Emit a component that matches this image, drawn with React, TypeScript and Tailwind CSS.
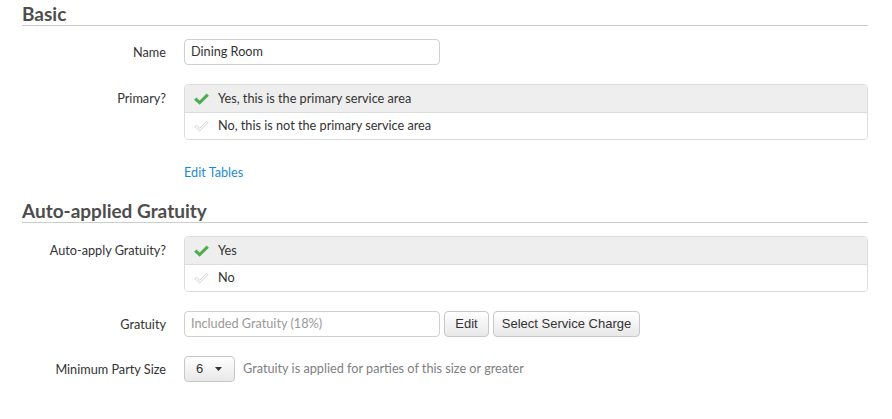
import React from 'react';

const font = "font-['Lato','Noto_Sans',sans-serif]";
const arial = "font-['Liberation_Sans','Arial',sans-serif]";

const Check: React.FC<{ on: boolean }> = ({ on }) => (
    <svg width="15" height="12" viewBox="0 0 16 13" className="shrink-0">
        {on ? (
            <polygon points="0,7.2 2.4,4.8 6,8.2 13.6,0.6 16,3 6,12.6" fill="#4cae4c" />
        ) : (
            <polygon points="0.8,7.2 2.4,5.6 6,9 13.6,1.4 15.2,3 6,11.8" fill="none" stroke="#c9c9c9" strokeWidth="0.9" />
        )}
    </svg>
);

const Label: React.FC<{ children: React.ReactNode; className?: string }> = ({ children, className }) => (
    <div className={`w-[144px] shrink-0 text-right text-[12.7px] leading-[18px] text-[#333] mr-[18px] ${className ?? ''}`}>{children}</div>
);

const Choices: React.FC<{ options: string[]; selected: number }> = ({ options, selected }) => (
    <div className="flex-1 border border-[#dcdcdc] rounded-[4px] overflow-hidden">
        {options.map((o, i) => (
            <div
                key={o}
                className={`h-[27px] flex items-center pl-[9px] text-[12.7px] text-[#333] ${i > 0 ? 'border-t border-[#dcdcdc]' : ''} ${i === selected ? 'bg-[#eeeeee]' : 'bg-white'}`}
            >
                <Check on={i === selected} />
                <span className="ml-[9px]">{o}</span>
            </div>
        ))}
    </div>
);

const btn = `h-[26px] border border-[#c8c8c8] rounded-[4px] bg-gradient-to-b from-white to-[#e8e8e8] text-[13px] text-[#333] whitespace-nowrap ${arial}`;

export default function App() {
    return (
        <div className={`w-[892px] h-[419px] bg-white pl-[22px] pr-[24px] pt-[3px] ${font}`}>
            {/* Basic */}
            <h2 className="text-[19px] font-bold leading-[21px] text-[#4d4d4d] pb-[1px] border-b border-[#cccccc]">Basic</h2>

            <div className="flex items-center mt-[13px]">
                <Label>Name</Label>
                <div className="w-[256px] h-[26px] border border-[#cfcfcf] rounded-[4px] pl-[6px] flex items-center text-[12.7px] text-[#333]">
                    Dining Room
                </div>
            </div>

            <div className="flex items-start mt-[19px]">
                <Label className="pt-[5px]">Primary?</Label>
                <Choices options={['Yes, this is the primary service area', 'No, this is not the primary service area']} selected={0} />
            </div>

            <div className="mt-[23px] pl-[162px] text-[12.7px] leading-[18px] text-[#1c8ad3]">
                <a href="#">Edit Tables</a>
            </div>

            {/* Auto-applied Gratuity */}
            <h2 className="mt-[19px] text-[19px] font-bold leading-[21px] text-[#4d4d4d] pb-[1px] border-b border-[#cccccc]">Auto-applied Gratuity</h2>

            <div className="flex items-start mt-[13px]">
                <Label className="pt-[5px]">Auto-apply Gratuity?</Label>
                <Choices options={['Yes', 'No']} selected={0} />
            </div>

            <div className="flex items-center mt-[19px]">
                <Label>Gratuity</Label>
                <div className="w-[256px] h-[26px] border border-[#cfcfcf] rounded-[4px] pl-[6px] flex items-center text-[12.7px] text-[#999]">
                    Included Gratuity (18%)
                </div>
                <button className={`${btn} ml-[4px] w-[45px]`}>Edit</button>
                <button className={`${btn} ml-[4px] w-[147px]`}>Select Service Charge</button>
            </div>

            <div className="flex items-center mt-[19px]">
                <Label>Minimum Party Size</Label>
                <div className={`${btn} w-[51px] flex items-center pl-[11px]`}>
                    <span>6</span>
                    <svg width="7" height="4" viewBox="0 0 7 4" className="ml-[12px]">
                        <polygon points="0,0 7,0 3.5,4" fill="#333" />
                    </svg>
                </div>
                <span className="ml-[8px] text-[12.7px] text-[#808080]">Gratuity is applied for parties of this size or greater</span>
            </div>
        </div>
    );
}
